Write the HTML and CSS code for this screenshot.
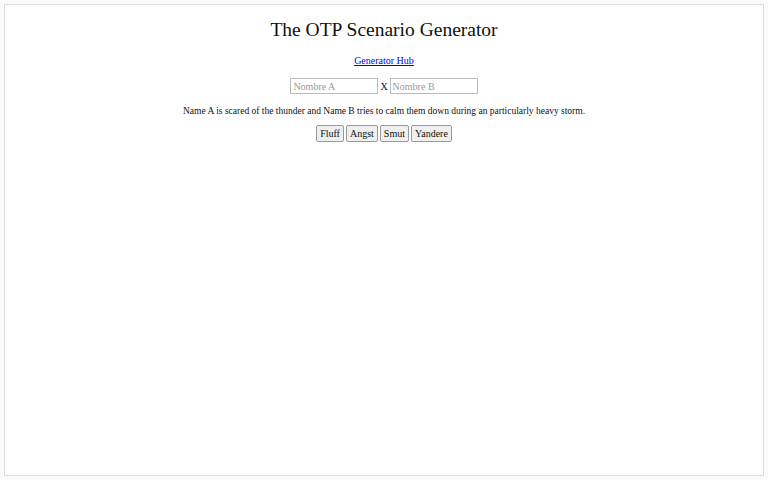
FILE: index.html
```html
<!DOCTYPE html>
<html lang="en">
<head>
  <meta charset="UTF-8">
  <title>The OTP Scenario Generator</title>
  <link rel="stylesheet" href="styles.css">
</head>
<body>

<div class="page">
  <h1>The OTP Scenario Generator</h1>
  <p class="hub"><a href="#">Generator Hub</a></p>

  <div class="names">
    <input type="text" id="nameA" placeholder="Nombre A" />
    <span class="x">X</span>
    <input type="text" id="nameB" placeholder="Nombre B" />
  </div>

  <p id="scenario">Name A is scared of the thunder and Name B tries to calm them down during an particularly heavy storm.</p>

  <div class="buttons">
    <button data-type="fluff">Fluff</button>
    <button data-type="angst">Angst</button>
    <button data-type="smut">Smut</button>
    <button data-type="yandere">Yandere</button>
  </div>
</div>

</body>
</html>
```

FILE: styles.css
```css
html, body {
  height: 100%;
}
body {
  margin: 0;
  padding: 4px;
  box-sizing: border-box;
  background: #fbfbfb;
  font-family: "Liberation Serif", serif;
  color: #111;
}
.page {
  height: 100%;
  box-sizing: border-box;
  background: #fff;
  border: 1px solid #ddd;
  text-align: center;
  padding-top: 14px;
}
h1 {
  font-size: 19.5px;
  font-weight: normal;
  margin: 0 0 14px;
}
.hub {
  font-size: 10px;
  margin: 0 0 12px;
}
.hub a {
  color: #0000ee;
}
.names {
  display: flex;
  justify-content: center;
  align-items: center;
  gap: 2px;
  font-size: 10px;
}
.names input {
  width: 88px;
  height: 16px;
  box-sizing: border-box;
  border: 1px solid #bbb;
  padding: 1px 2px;
  font-family: inherit;
  font-size: 10px;
}
.names input::placeholder {
  color: #999;
}
#scenario {
  font-size: 9.5px;
  margin: 12px 0 9px;
}
.buttons {
  display: flex;
  justify-content: center;
  gap: 2px;
}
.buttons button {
  font-family: inherit;
  font-size: 10px;
  height: 17px;
  padding: 0 3px;
  background: #efefef;
  border: 1px solid #999;
  border-radius: 2px;
  color: #111;
}
```
